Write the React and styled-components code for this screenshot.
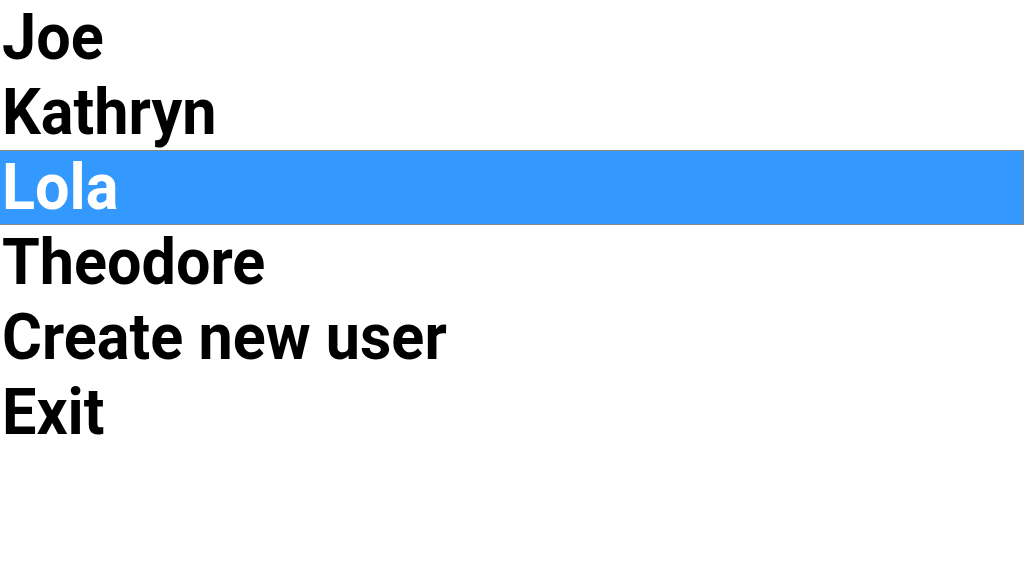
import React from "react";
import styled, { createGlobalStyle } from "styled-components";

const GlobalStyle = createGlobalStyle`
  html, body {
    margin: 0;
    padding: 0;
    background: #ffffff;
  }
`;

const Menu = styled.ul`
  list-style: none;
  margin: 0;
  padding: 0;
  display: flex;
  flex-direction: column;
  font-family: Roboto, "Liberation Sans", sans-serif;
`;

const MenuItem = styled.li`
  box-sizing: border-box;
  height: 75px;
  font-size: 64px;
  font-weight: 700;
  line-height: 75px;
  white-space: nowrap;
  color: ${(p) => (p.$selected ? "#ffffff" : "#000000")};
  background: ${(p) => (p.$selected ? "#3399ff" : "transparent")};
  border: 1px solid ${(p) => (p.$selected ? "#888888" : "transparent")};
  border-left: none;
  display: flex;
  align-items: center;
  padding-left: 2px;
`;

const Label = styled.span`
  display: inline-block;
  transform: scaleX(0.955);
  transform-origin: left center;
`;

const items = ["Joe", "Kathryn", "Lola", "Theodore", "Create new user", "Exit"];

export default function App() {
  return (
    <>
      <GlobalStyle />
      <Menu>
        {items.map((name, i) => (
          <MenuItem key={name} $selected={i === 2}>
            <Label>{name}</Label>
          </MenuItem>
        ))}
      </Menu>
    </>
  );
}
